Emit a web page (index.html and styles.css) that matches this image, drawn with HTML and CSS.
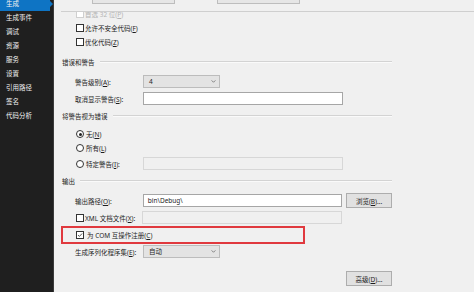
FILE: index.html
```html
<!DOCTYPE html>
<html lang="zh-CN">
<head>
  <meta charset="UTF-8" />
  <title>项目属性 - 生成</title>
  <link rel="stylesheet" href="styles.css">
</head>
<body>
  <div class="app">
    <nav class="sidebar">
      <ul class="tabs">
        <li class="active">生成</li>
        <li>生成事件</li>
        <li>调试</li>
        <li>资源</li>
        <li>服务</li>
        <li>设置</li>
        <li>引用路径</li>
        <li>签名</li>
        <li>代码分析</li>
      </ul>
    </nav>

    <main class="page">
      <div class="top-strip">
        <span class="stub stub-a"></span>
        <span class="stub stub-b"></span>
      </div>

      <div class="scroll">
        <div class="content">
          <div class="opt disabled"><span class="check"></span>首选 32 位(<u>P</u>)</div>
          <div class="opt"><span class="check"></span>允许不安全代码(<u>F</u>)</div>
          <div class="opt"><span class="check"></span>优化代码(<u>Z</u>)</div>

          <div class="group first"><span>错误和警告</span></div>
          <div class="field">
            <label>警告级别(<u>A</u>):</label>
            <div class="combo">4<svg class="chev" viewBox="0 0 6 4"><polyline points="0.5,0.5 3,3 5.5,0.5"/></svg></div>
          </div>
          <div class="field">
            <label>取消显示警告(<u>S</u>):</label>
            <div class="input"></div>
          </div>

          <div class="group"><span>将警告视为错误</span></div>
          <div class="opt"><span class="radio on"></span>无(<u>N</u>)</div>
          <div class="opt"><span class="radio"></span>所有(<u>L</u>)</div>
          <div class="opt field-opt">
            <span class="radio"></span><span class="opt-label">特定警告(<u>I</u>):</span>
            <div class="input off"></div>
          </div>

          <div class="group"><span>输出</span></div>
          <div class="field">
            <label>输出路径(<u>O</u>):</label>
            <div class="input">bin\Debug\</div>
            <button class="btn">浏览(<u>B</u>)...</button>
          </div>
          <div class="opt field-opt">
            <span class="check"></span><span class="opt-label">XML 文档文件(<u>X</u>):</span>
            <div class="input off"></div>
          </div>
          <div class="mark">
            <div class="opt"><span class="check on"><svg viewBox="0 0 8 8"><polyline points="1.3,4 3.2,5.9 6.8,2"/></svg></span>为 COM 互操作注册(<u>C</u>)</div>
          </div>
          <div class="field">
            <label>生成序列化程序集(<u>E</u>):</label>
            <div class="combo">自动<svg class="chev" viewBox="0 0 6 4"><polyline points="0.5,0.5 3,3 5.5,0.5"/></svg></div>
          </div>

          <div class="actions">
            <button class="btn">高级(<u>D</u>)...</button>
          </div>
        </div>
      </div>
    </main>
  </div>
</body>
</html>
```

FILE: styles.css
```css
html, body { margin: 0; height: 100%; }
body { font-family: "Noto Sans", "Noto Sans CJK SC", sans-serif; font-size: 6.5px; color: #1e1e1e; background: #f0f0f0; overflow: hidden; }
u { text-decoration: underline; text-underline-offset: 1px; }

.app { display: flex; height: 292px; }

/* left tab list */
.sidebar { width: 53px; background: #1f1f1f; overflow: hidden; border-right: 1px solid #3a3a3a; }
.tabs { list-style: none; margin: -3px 0 0; padding: 0; }
.tabs li { position: relative; height: 14px; line-height: 14px; padding-left: 6px; color: #f1f1f1; width: 44px; }
.tabs li.active { background: #0e74c4; }
.tabs li.active::after { content: ""; position: absolute; right: -3px; top: 4px; border-left: 3px solid #0e74c4; border-top: 3px solid transparent; border-bottom: 3px solid transparent; }

/* page */
.page { flex: 1; display: flex; flex-direction: column; min-width: 0; }
.top-strip { display: flex; height: 11px; margin-left: 7px; border-bottom: 1px solid #cfcfcf; }
.stub { height: 3px; background: #e6e6e6; border: 1px solid #bdbdbd; border-top: none; }
.stub-a { margin-left: 31px; width: 81px; }
.stub-b { margin-left: 42px; width: 81px; }

.scroll { flex: 1; overflow: hidden; }
.content { margin-top: -5px; padding: 0 82px 0 8px; }

.opt { display: flex; align-items: center; height: 14px; padding-left: 14px; white-space: nowrap; }
.opt.disabled { color: #b4b4b4; }
.opt.disabled .check { border-color: #cfcfcf; }
.check { width: 6px; height: 6px; border: 1px solid #333; background: #fff; margin-right: 1px; display: flex; }
.check svg { width: 6px; height: 6px; }
.check svg polyline { fill: none; stroke: #222; stroke-width: 1; }
.radio { width: 6px; height: 6px; border: 1px solid #333; border-radius: 50%; background: #fff; margin-right: 2px; position: relative; }
.radio.on::after { content: ""; position: absolute; left: 1.5px; top: 1.5px; width: 3px; height: 3px; border-radius: 50%; background: #222; }

.group { display: flex; align-items: center; height: 14px; margin-top: 2px; white-space: nowrap; }
.group.first { margin-top: 6px; }
.group::after { content: ""; flex: 1; border-top: 1px solid #d3d3d3; border-bottom: 1px solid #fafafa; margin-left: 5px; }

.field { display: flex; align-items: center; height: 17px; padding-left: 13px; white-space: nowrap; }
.field label { width: 68px; }
.field-opt { height: 17px; }
.opt-label { width: 57px; }

.combo { position: relative; width: 70px; height: 11px; line-height: 11px; padding-left: 5px; background: #e3e3e3; border: 1px solid #bcbcbc; }
.chev { position: absolute; right: 3px; top: 4px; width: 5px; height: 3px; }
.chev polyline { fill: none; stroke: #555; stroke-width: 0.9; }

.input { width: 194px; height: 11px; line-height: 11px; padding-left: 4px; background: #fff; border: 1px solid #a6a6a6; }
.input.off { background: #f0f0f0; border-color: #d7d7d7; }

.btn { font: inherit; color: #1e1e1e; width: 46px; height: 15px; padding: 0; margin-left: 4px; background: #e1e1e1; border: 1px solid #adadad; }

.mark { margin-left: -1px; width: 240px; border: 2px solid #e0393e; }
.mark .opt { padding-left: 13px; }
.mark .check { margin-right: 3px; }

.group + .field { margin-top: 4px; }
.group + .opt { margin-top: 4px; }
.mark + .field { height: 15px; }
.actions { display: flex; justify-content: flex-end; margin-top: 12px; }
```
